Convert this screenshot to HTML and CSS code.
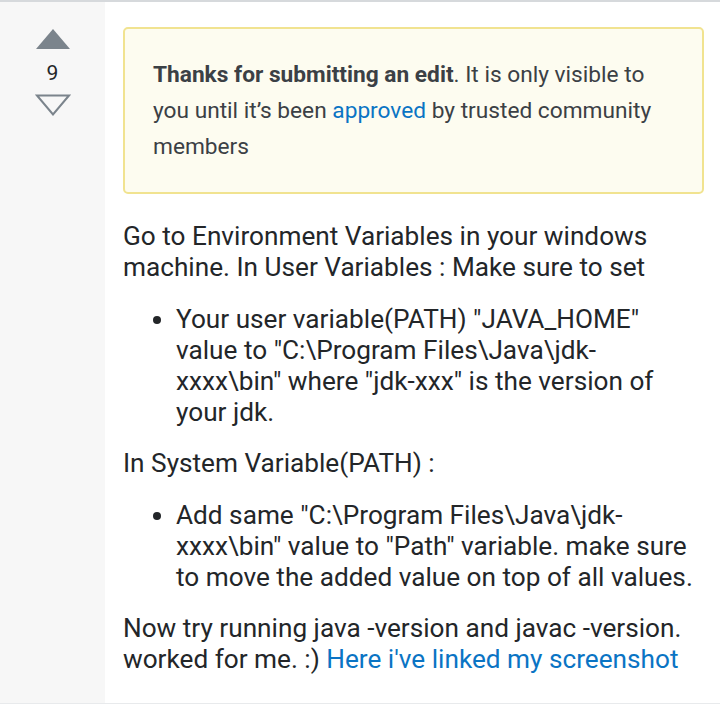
FILE: index.html
```html
<!DOCTYPE html>
<html>
<head>
<meta charset="utf-8">
<link rel="stylesheet" href="styles.css">
</head>
<body>
<div class="post">
  <div class="votecell">
    <svg class="arrow" width="36" height="22" viewBox="0 0 36 22"><path d="M1 21 L18 1 L35 21 Z" fill="#7b848c"/></svg>
    <div class="count">9</div>
    <svg class="arrow" width="36" height="22" viewBox="0 0 36 22"><path d="M2 1.5 L34 1.5 L18 20.5 Z" fill="none" stroke="#7b848c" stroke-width="2" stroke-linejoin="miter"/></svg>
  </div>
  <div class="postcell">
    <div class="notice">
      <strong>Thanks for submitting an edit</strong>. It is only visible to you until it’s been <a href="#">approved</a> by trusted community members
    </div>
    <div class="body">
      <p>Go to Environment Variables in your windows machine. In User Variables : Make sure to set</p>
      <ul>
        <li>Your user variable(PATH) "JAVA_HOME" value to "C:\Program Files\Java\jdk-xxxx\bin" where "jdk-xxx" is the version of your jdk.</li>
      </ul>
      <p>In System Variable(PATH) :</p>
      <ul>
        <li>Add same "C:\Program Files\Java\jdk-xxxx\bin" value to "Path" variable. make sure to move the added value on top of all values.</li>
      </ul>
      <p>Now try running java -version and javac -version. worked for me. :) <a href="#">Here i've linked my screenshot</a></p>
    </div>
  </div>
</div>
</body>
</html>
```
FILE: styles.css
```css
html, body {
  margin: 0;
  padding: 0;
  background: #ffffff;
}
body {
  font-family: Roboto, "Noto Sans", sans-serif;
  color: #232629;
}
.post {
  display: flex;
  border-top: 2px solid #d6d9dc;
  border-bottom: 1px solid #e8eaec;
}
.votecell {
  width: 105px;
  flex: none;
  background: #f7f7f7;
  display: flex;
  flex-direction: column;
  align-items: center;
  padding-top: 26px;
}
.arrow {
  display: block;
}
.count {
  font-size: 21px;
  line-height: 26px;
  margin: 10px 0 8px;
  color: #232629;
}
.postcell {
  flex: 1;
  padding: 25px 16px 28px 18px;
  min-width: 0;
}
.notice {
  background: #fdfcf0;
  border: 2px solid #f1e390;
  border-radius: 5px;
  padding: 28px 28px 27px 28px;
  font-size: 22.7px;
  line-height: 36px;
  color: #3b4045;
}
.notice strong {
  font-weight: 700;
}
a {
  color: #0a74c4;
  text-decoration: none;
}
.body {
  font-size: 26.2px;
  line-height: 31px;
  margin: 27px 10px 0 0;
}
.body p {
  margin: 0 0 20.6px;
}
.body p:last-child {
  margin-bottom: 0;
}
.body ul {
  margin: 0 0 20.6px;
  padding-left: 53px;
}
```
